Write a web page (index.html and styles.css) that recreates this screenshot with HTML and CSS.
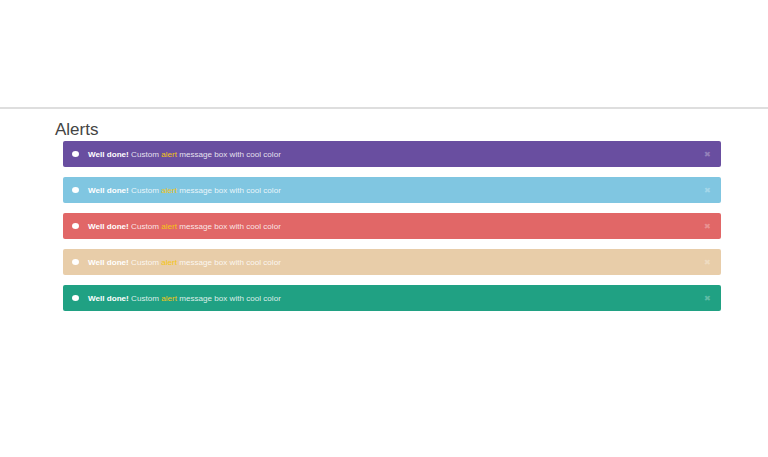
FILE: index.html
```html
<!DOCTYPE html>
<html>
<head>
<meta charset="utf-8">
<link rel="stylesheet" href="styles.css">
</head>
<body>
<div class="top"></div>
<hr class="rule">
<main class="content">
  <h2 class="title">Alerts</h2>
  <div class="alerts">
    <div class="alert purple"><span class="dot"></span><span class="msg"><b>Well done!</b> Custom <span class="hl">alert</span> message box with cool color</span><span class="close">&#x2716;</span></div>
    <div class="alert blue"><span class="dot"></span><span class="msg"><b>Well done!</b> Custom <span class="hl">alert</span> message box with cool color</span><span class="close">&#x2716;</span></div>
    <div class="alert red"><span class="dot"></span><span class="msg"><b>Well done!</b> Custom <span class="hl">alert</span> message box with cool color</span><span class="close">&#x2716;</span></div>
    <div class="alert tan"><span class="dot"></span><span class="msg"><b>Well done!</b> Custom <span class="hl">alert</span> message box with cool color</span><span class="close">&#x2716;</span></div>
    <div class="alert green"><span class="dot"></span><span class="msg"><b>Well done!</b> Custom <span class="hl">alert</span> message box with cool color</span><span class="close">&#x2716;</span></div>
  </div>
</main>
</body>
</html>
```
FILE: styles.css
```css
html, body {
  margin: 0;
  padding: 0;
  background: #fff;
  font-family: "Liberation Sans", Arial, sans-serif;
}
.top {
  height: 107px;
}
.rule {
  margin: 0;
  border: 0;
  border-top: 2px solid #dedede;
  height: 0;
}
.content {
  padding: 11px 0 0 55px;
}
.title {
  margin: 0;
  font-size: 17px;
  font-weight: normal;
  color: #444;
  line-height: 20px;
}
.alerts {
  margin: 1px 0 0 8px;
  width: 658px;
  display: flex;
  flex-direction: column;
  gap: 10px;
}
.alert {
  height: 26px;
  border-radius: 2px;
  display: flex;
  align-items: center;
  padding: 0 10px 0 9px;
  font-size: 8.1px;
  color: rgba(255,255,255,0.85);
  box-sizing: border-box;
}
.dot {
  width: 7px;
  height: 6px;
  border-radius: 50%;
  background: #fff;
  margin-right: 9px;
}
.msg b {
  color: #fff;
  font-weight: bold;
}
.hl {
  color: #f5c518;
}
.close {
  margin-left: auto;
  font-size: 8px;
  color: rgba(255,255,255,0.3);
}
.purple { background: #694ea0; }
.blue { background: #80c6e1; }
.red { background: #e16767; }
.tan { background: #e8cda9; }
.green { background: #20a183; }
```
